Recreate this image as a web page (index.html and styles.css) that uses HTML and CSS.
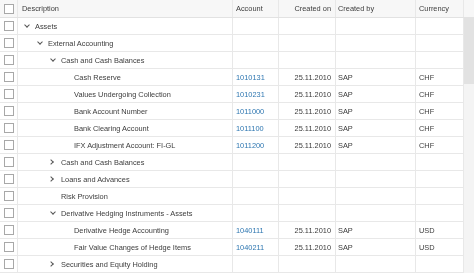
FILE: index.html
```html
<!DOCTYPE html>
<html lang="en">
<head>
  <meta charset="UTF-8" />
  <title>Accounts</title>
  <link rel="stylesheet" href="styles.css">
</head>
<body>

  <div class="table">
    <!-- Header -->
    <div class="row head">
      <div class="cell c-check"><span class="box"></span></div>
      <div class="cell c-desc">Description</div>
      <div class="cell c-acc">Account</div>
      <div class="cell c-date">Created on</div>
      <div class="cell c-by">Created by</div>
      <div class="cell c-cur">Currency</div>
      <div class="cell c-gap"></div>
    </div>

    <div class="body">
      <div class="rows">
        <div class="row">
          <div class="cell c-check"><span class="box"></span></div>
          <div class="cell c-desc lvl-0"><span class="toggle open"></span>Assets</div>
          <div class="cell c-acc"></div><div class="cell c-date"></div><div class="cell c-by"></div><div class="cell c-cur"></div>
        </div>
        <div class="row">
          <div class="cell c-check"><span class="box"></span></div>
          <div class="cell c-desc lvl-1"><span class="toggle open"></span>External Accounting</div>
          <div class="cell c-acc"></div><div class="cell c-date"></div><div class="cell c-by"></div><div class="cell c-cur"></div>
        </div>
        <div class="row">
          <div class="cell c-check"><span class="box"></span></div>
          <div class="cell c-desc lvl-2"><span class="toggle open"></span>Cash and Cash Balances</div>
          <div class="cell c-acc"></div><div class="cell c-date"></div><div class="cell c-by"></div><div class="cell c-cur"></div>
        </div>
        <div class="row">
          <div class="cell c-check"><span class="box"></span></div>
          <div class="cell c-desc lvl-3"><span class="toggle"></span>Cash Reserve</div>
          <div class="cell c-acc"><a href="#">1010131</a></div><div class="cell c-date">25.11.2010</div><div class="cell c-by">SAP</div><div class="cell c-cur">CHF</div>
        </div>
        <div class="row">
          <div class="cell c-check"><span class="box"></span></div>
          <div class="cell c-desc lvl-3"><span class="toggle"></span>Values Undergoing Collection</div>
          <div class="cell c-acc"><a href="#">1010231</a></div><div class="cell c-date">25.11.2010</div><div class="cell c-by">SAP</div><div class="cell c-cur">CHF</div>
        </div>
        <div class="row">
          <div class="cell c-check"><span class="box"></span></div>
          <div class="cell c-desc lvl-3"><span class="toggle"></span>Bank Account Number</div>
          <div class="cell c-acc"><a href="#">1011000</a></div><div class="cell c-date">25.11.2010</div><div class="cell c-by">SAP</div><div class="cell c-cur">CHF</div>
        </div>
        <div class="row">
          <div class="cell c-check"><span class="box"></span></div>
          <div class="cell c-desc lvl-3"><span class="toggle"></span>Bank Clearing Account</div>
          <div class="cell c-acc"><a href="#">1011100</a></div><div class="cell c-date">25.11.2010</div><div class="cell c-by">SAP</div><div class="cell c-cur">CHF</div>
        </div>
        <div class="row">
          <div class="cell c-check"><span class="box"></span></div>
          <div class="cell c-desc lvl-3"><span class="toggle"></span>IFX Adjustment Account: FI-GL</div>
          <div class="cell c-acc"><a href="#">1011200</a></div><div class="cell c-date">25.11.2010</div><div class="cell c-by">SAP</div><div class="cell c-cur">CHF</div>
        </div>
        <div class="row">
          <div class="cell c-check"><span class="box"></span></div>
          <div class="cell c-desc lvl-2"><span class="toggle closed"></span>Cash and Cash Balances</div>
          <div class="cell c-acc"></div><div class="cell c-date"></div><div class="cell c-by"></div><div class="cell c-cur"></div>
        </div>
        <div class="row">
          <div class="cell c-check"><span class="box"></span></div>
          <div class="cell c-desc lvl-2"><span class="toggle closed"></span>Loans and Advances</div>
          <div class="cell c-acc"></div><div class="cell c-date"></div><div class="cell c-by"></div><div class="cell c-cur"></div>
        </div>
        <div class="row">
          <div class="cell c-check"><span class="box"></span></div>
          <div class="cell c-desc lvl-2"><span class="toggle"></span>Risk Provision</div>
          <div class="cell c-acc"></div><div class="cell c-date"></div><div class="cell c-by"></div><div class="cell c-cur"></div>
        </div>
        <div class="row">
          <div class="cell c-check"><span class="box"></span></div>
          <div class="cell c-desc lvl-2"><span class="toggle open"></span>Derivative Hedging Instruments - Assets</div>
          <div class="cell c-acc"></div><div class="cell c-date"></div><div class="cell c-by"></div><div class="cell c-cur"></div>
        </div>
        <div class="row">
          <div class="cell c-check"><span class="box"></span></div>
          <div class="cell c-desc lvl-3"><span class="toggle"></span>Derivative Hedge Accounting</div>
          <div class="cell c-acc"><a href="#">1040111</a></div><div class="cell c-date">25.11.2010</div><div class="cell c-by">SAP</div><div class="cell c-cur">USD</div>
        </div>
        <div class="row">
          <div class="cell c-check"><span class="box"></span></div>
          <div class="cell c-desc lvl-3"><span class="toggle"></span>Fair Value Changes of Hedge Items</div>
          <div class="cell c-acc"><a href="#">1040211</a></div><div class="cell c-date">25.11.2010</div><div class="cell c-by">SAP</div><div class="cell c-cur">USD</div>
        </div>
        <div class="row">
          <div class="cell c-check"><span class="box"></span></div>
          <div class="cell c-desc lvl-2"><span class="toggle closed"></span>Securities and Equity Holding</div>
          <div class="cell c-acc"></div><div class="cell c-date"></div><div class="cell c-by"></div><div class="cell c-cur"></div>
        </div>
      </div>

      <!-- vertical scrollbar -->
      <div class="scrollbar"><div class="thumb"></div></div>
    </div>
  </div>

</body>
</html>
```

FILE: styles.css
```css
body {
  margin: 0;
  padding: 0;
  background: #fff;
  font-family: 'Liberation Sans', Arial, sans-serif;
  font-size: 7.4px;
  color: #3c3c3c;
  overflow: hidden;
}
.table {
  width: 474px;
  height: 273px;
  overflow: hidden;
  will-change: transform; /* grayscale text antialiasing */
}
.row {
  display: flex;
  height: 16px;
  border-bottom: 1px solid #e8e8e8;
}
.row.head {
  height: 17px;
  background: #f7f7f7;
  border-bottom: 1px solid #e2e2e2;
}
.cell {
  display: flex;
  align-items: center;
  box-sizing: border-box;
  border-right: 1px solid #e8e8e8;
  white-space: nowrap;
  overflow: hidden;
}
.c-check { width: 18px; justify-content: center; }
.c-desc  { width: 215px; padding-left: 3px; }
.c-acc   { width: 46px; padding-left: 3px; }
.c-date  { width: 57px; justify-content: flex-end; padding-right: 4px; }
.c-by    { width: 80px; padding-left: 2px; }
.c-cur   { width: 48px; padding-left: 3px; }
.c-gap   { width: 10px; border-right: none; }

.head .c-desc { padding-left: 4px; }

.box {
  width: 10px;
  height: 10px;
  box-sizing: border-box;
  border: 1px solid #a8a8a8;
  background: #fff;
}

/* tree indentation */
.lvl-1 { padding-left: 16px; }
.lvl-2 { padding-left: 29px; }
.lvl-3 { padding-left: 42px; }

.toggle {
  position: relative;
  width: 14px;
  height: 100%;
  flex: none;
}
.toggle.open::before,
.toggle.closed::before {
  content: '';
  position: absolute;
  width: 3px;
  height: 3px;
  border-right: 1px solid #555;
  border-bottom: 1px solid #555;
}
.toggle.open::before {
  left: 4px;
  top: 5px;
  transform: rotate(45deg);
}
.toggle.closed::before {
  left: 2px;
  top: 6px;
  transform: rotate(-45deg);
}

a {
  color: #2f77b1;
  text-decoration: none;
}

.body {
  display: flex;
}
.rows {
  width: 464px;
}
.scrollbar {
  width: 10px;
  height: 255px;
  background: #f4f4f4;
}
.thumb {
  height: 66px;
  background: #e2e2e2;
}
```
